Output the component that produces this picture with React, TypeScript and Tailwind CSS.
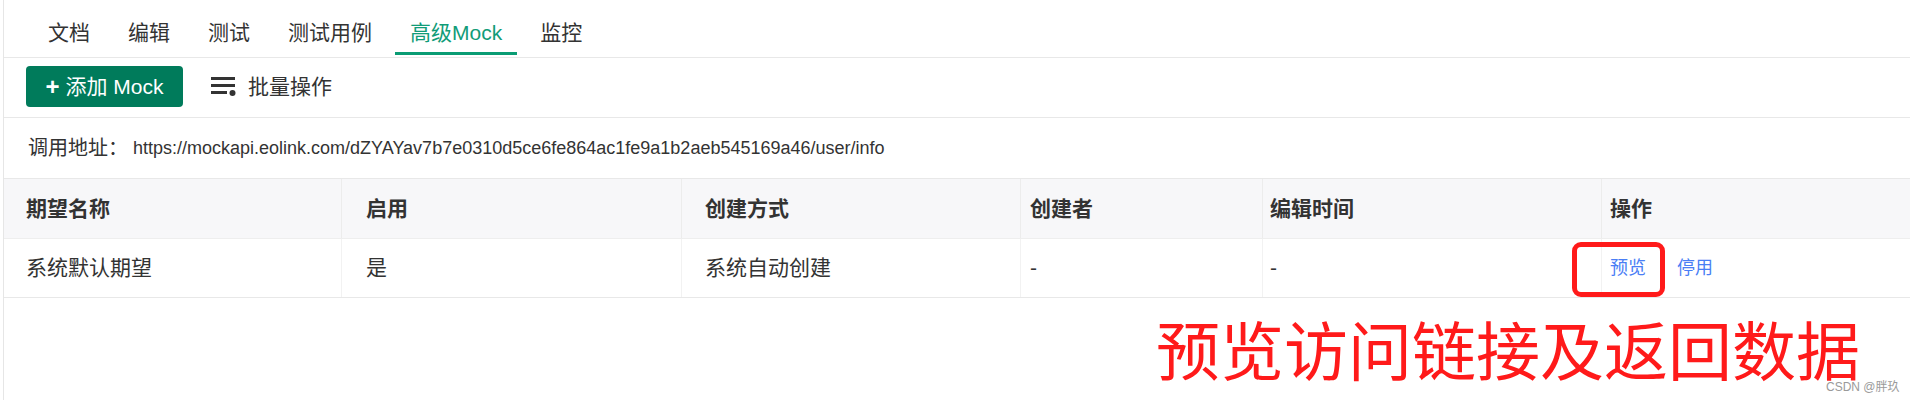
import React from "react";

const FONT = { fontFamily: '"Liberation Sans", "Noto Sans CJK SC", sans-serif' };

function BatchIcon() {
  return (
    <svg width="25" height="20" viewBox="0 0 25 20" className="shrink-0">
      <rect x="0" y="0" width="24" height="3" fill="#333" />
      <rect x="0" y="7" width="24" height="3" fill="#333" />
      <rect x="0" y="14" width="16" height="3" fill="#333" />
      <circle cx="21.5" cy="16" r="3" fill="#333" />
    </svg>
  );
}

const tabs = ["文档", "编辑", "测试", "测试用例", "高级Mock", "监控"];

const cols = [
  { w: "w-[337px]", pl: "pl-[22px]", head: "期望名称", cell: "系统默认期望" },
  { w: "w-[340px]", pl: "pl-[24px]", head: "启用", cell: "是" },
  { w: "w-[339px]", pl: "pl-[23px]", head: "创建方式", cell: "系统自动创建" },
  { w: "w-[242px]", pl: "pl-[9px]", head: "创建者", cell: "-" },
  { w: "w-[339px]", pl: "pl-[7px]", head: "编辑时间", cell: "-" },
];

export default function App() {
  return (
    <div className="relative w-[1910px] h-[400px] bg-white pl-[3px] overflow-hidden text-[#333]" style={FONT}>
      <div className="h-full border-l border-[#e6e6e6] flex flex-col">
        {/* tabs */}
        <div className="h-[58px] border-b border-[#e8e8e8] flex pl-[29px] gap-[8px]">
          {tabs.map((t) => {
            const active = t === "高级Mock";
            return (
              <div key={t} className="relative px-[15px] h-full">
                <div className={`pt-[22px] text-[21px] leading-[21px] ${active ? "text-[#119c78]" : "text-[#333]"}`}>{t}</div>
                {active && <div className="absolute left-0 right-0 top-[52px] h-[3px] bg-[#0a9c74]" />}
              </div>
            );
          })}
        </div>
        {/* toolbar */}
        <div className="h-[60px] border-b border-[#e8e8e8] flex items-start pt-[8px] pl-[22px]">
          <button className="w-[157px] h-[41px] rounded-[4px] bg-[#007b5b] text-white text-[21px] leading-none flex items-center justify-center gap-[6px]">
            <span className="text-[24px] font-bold leading-none">+</span>
            <span>添加 Mock</span>
          </button>
          <div className="flex items-center ml-[28px] h-[41px] gap-[12px] text-[21px] text-[#333]">
            <BatchIcon />
            <span>批量操作</span>
          </div>
        </div>
        {/* url */}
        <div className="h-[60px] flex items-center pl-[24px] text-[#333]">
          <span className="text-[20px]">调用地址：</span>
          <span className="ml-[5px] text-[18px]">https://mockapi.eolink.com/dZYAYav7b7e0310d5ce6fe864ac1fe9a1b2aeb545169a46/user/info</span>
        </div>
        {/* table */}
        <div className="border-t border-[#e8e8e8]">
          <div className="flex h-[60px] bg-[#f7f7f9] border-b border-[#eeeeee]">
            {cols.map((c, i) => (
              <div key={c.head} className={`${c.w} ${c.pl} ${i > 0 ? "border-l border-[#ececec]" : ""} flex items-center font-bold text-[21px] text-[#333]`}>
                {c.head}
              </div>
            ))}
            <div className="flex-1 pl-[8px] border-l border-[#ececec] flex items-center font-bold text-[21px] text-[#333]">操作</div>
          </div>
          <div className="flex h-[59px] border-b border-[#e8e8e8]">
            {cols.map((c, i) => (
              <div key={c.head} className={`${c.w} ${c.pl} ${i > 0 ? "border-l border-[#f2f2f2]" : ""} flex items-center text-[21px] text-[#333]`}>
                {c.cell}
              </div>
            ))}
            <div className="flex-1 pl-[8px] border-l border-[#f2f2f2] flex items-center text-[18px] text-[#4a7ef5] gap-[31px]">
              <span>预览</span>
              <span>停用</span>
            </div>
          </div>
        </div>
      </div>
      {/* annotations */}
      <div className="absolute left-[1572px] top-[242px] w-[93px] h-[55px] border-[5px] border-[#ff1a1a] rounded-[9px]" />
      <div
        className="absolute left-[1156px] top-[318px] text-[64px] leading-[58px] text-[#ff1a1a] whitespace-nowrap"
        style={{ fontFamily: '"Noto Sans CJK SC", sans-serif' }}
      >
        预览访问链接及返回数据
      </div>
      <div className="absolute left-[1826px] top-[381px] text-[12px] leading-[12px] text-[#9a9a9a] whitespace-nowrap">CSDN @胖玖</div>
    </div>
  );
}
